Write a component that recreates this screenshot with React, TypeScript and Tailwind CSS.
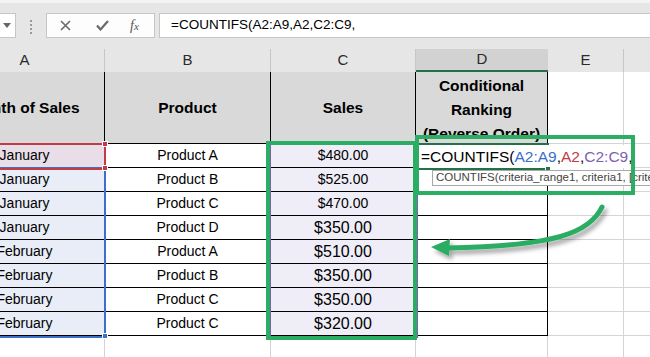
import React from "react";

const GREEN = "#2bad63";

const rows: [string, string, string, boolean][] = [
  ["January", "Product A", "$480.00", false],
  ["January", "Product B", "$525.00", false],
  ["January", "Product C", "$470.00", false],
  ["January", "Product D", "$350.00", true],
  ["February", "Product A", "$510.00", true],
  ["February", "Product B", "$350.00", true],
  ["February", "Product C", "$350.00", true],
  ["February", "Product C", "$320.00", true],
];

const FormulaBar = () => (
  <div className="h-[49px] bg-[#e6e6e6] border-t-[3px] border-[#f3f3f3] flex items-start pt-[10px]">
    <div className="w-[16px] h-[25px] bg-white border border-l-0 border-[#c6c6c6] flex items-center pl-[3px]">
      <svg width="8" height="5" viewBox="0 0 8 5">
        <path d="M0 0 L8 0 L4 5 Z" fill="#666" />
      </svg>
    </div>
    <div className="ml-[14px] mt-[7px] flex flex-col gap-[2px]">
      <span className="w-[2px] h-[2px] bg-[#9a9a9a]" />
      <span className="w-[2px] h-[2px] bg-[#9a9a9a]" />
      <span className="w-[2px] h-[2px] bg-[#9a9a9a]" />
      <span className="w-[2px] h-[2px] bg-[#9a9a9a]" />
    </div>
    <div className="ml-[14px] w-[109px] h-[25px] bg-[#fdfdfd] border border-[#c6c6c6] flex items-center">
      <svg className="ml-[13px]" width="11" height="11" viewBox="0 0 11 11">
        <path d="M1 1 L10 10 M10 1 L1 10" stroke="#6a6a6a" strokeWidth="1.6" />
      </svg>
      <svg className="ml-[25px]" width="13" height="11" viewBox="0 0 13 11">
        <path d="M1 5.5 L4.5 9.5 L12 1" stroke="#6a6a6a" strokeWidth="2.2" fill="none" />
      </svg>
      <span className="ml-[21px] font-['Liberation_Serif',serif] italic text-[14px] text-[#555] leading-none">
        f<span className="text-[11px]">x</span>
      </span>
    </div>
    <div className="ml-[4px] flex-1 h-[25px] bg-white border border-r-0 border-[#c6c6c6] flex items-center pl-[11px] text-[13.5px] text-black">
      =COUNTIFS(A2:A9,A2,C2:C9,
    </div>
  </div>
);

const ColumnHeaders = () => (
  <div className="ml-[-55px] flex h-[23px] bg-[#e6e6e6] text-[15px] text-[#2a2a2a]">
    <div className="w-[160px] shrink-0 border-r border-[#c6c6c6] flex items-center justify-center">A</div>
    <div className="w-[166px] shrink-0 border-r border-[#c6c6c6] flex items-center justify-center">B</div>
    <div className="w-[145px] shrink-0 border-r border-[#c6c6c6] flex items-center justify-center">C</div>
    <div className="w-[132px] shrink-0 bg-[#d2d2d2] border-b-2 border-[#217346] flex items-center justify-center">D</div>
    <div className="w-[76px] shrink-0 border-r border-[#c6c6c6] flex items-center justify-center">E</div>
    <div className="flex-1" />
  </div>
);

const Grid = () => (
  <div className="ml-[-55px] flex flex-col text-black">
    <div className="flex h-[72px] font-bold text-[15.5px] leading-[24px] text-center">
      <div className="w-[160px] shrink-0 bg-[#d9d9d9] border-r border-b border-black flex items-center justify-center">
        Month of Sales
      </div>
      <div className="w-[166px] shrink-0 bg-[#d9d9d9] border-r border-b border-black flex items-center justify-center">
        Product
      </div>
      <div className="w-[145px] shrink-0 bg-[#d9d9d9] border-r border-b border-black flex items-center justify-center">
        Sales
      </div>
      <div className="w-[132px] shrink-0 bg-[#d9d9d9] border-r border-b border-black flex flex-col items-center pt-[2px] overflow-hidden whitespace-nowrap">
        <span>Conditional</span>
        <span>Ranking</span>
        <span>(Reverse Order)</span>
      </div>
      <div className="w-[76px] shrink-0 border-r border-b border-[#d4d4d4]" />
      <div className="flex-1 border-b border-[#d4d4d4]" />
    </div>
    {rows.map(([month, product, sales, big], i) => (
      <div key={i} className="flex h-[24px] text-[14px]">
        <div
          className={`w-[160px] shrink-0 border-r border-b border-black flex items-center justify-center ${
            i === 0 ? "bg-[#e9dde8]" : "bg-[#e8edf7]"
          }`}
        >
          {month}
        </div>
        <div className="w-[166px] shrink-0 border-r border-b border-black flex items-center justify-center">
          {product}
        </div>
        <div
          className={`w-[145px] shrink-0 bg-[#efedf7] border-r border-b border-black flex items-center justify-center ${
            big ? "text-[16px]" : "text-[14px]"
          }`}
        >
          {sales}
        </div>
        <div className="w-[132px] shrink-0 border-r border-b border-black" />
        <div className="w-[76px] shrink-0 border-r border-b border-[#d4d4d4]" />
        <div className="flex-1 border-b border-[#d4d4d4]" />
      </div>
    ))}
    <div className="flex h-[24px]">
      <div className="w-[160px] shrink-0 border-r border-b border-[#d4d4d4]" />
      <div className="w-[166px] shrink-0 border-r border-b border-[#d4d4d4]" />
      <div className="w-[145px] shrink-0 border-r border-b border-[#d4d4d4]" />
      <div className="w-[132px] shrink-0 border-r border-b border-[#d4d4d4]" />
      <div className="w-[76px] shrink-0 border-r border-b border-[#d4d4d4]" />
      <div className="flex-1 border-b border-[#d4d4d4]" />
    </div>
  </div>
);

const Overlays = () => (
  <>
    {/* A2:A9 blue range */}
    <div className="absolute left-[-4px] top-[167px] w-[110px] h-[171px] border-2 border-[#3a70c8]" />
    <div className="absolute left-[102px] top-[333px] w-[6px] h-[6px] bg-[#3a70c8] border border-white" />
    {/* A2 red range */}
    <div className="absolute left-[-4px] top-[143px] w-[110px] h-[27px] border-2 border-[#c43b48]" />
    <div className="absolute left-[102px] top-[141px] w-[6px] h-[6px] bg-[#c43b48] border border-white" />
    <div className="absolute left-[102px] top-[165px] w-[6px] h-[6px] bg-[#c43b48] border border-white" />
    {/* C2:C9 purple range */}
    <div className="absolute left-[269px] top-[143px] w-[149px] h-[195px] border-2 border-[#7e5fb4]" />
    {/* green box around sales */}
    <div
      className="absolute left-[266px] top-[141px] w-[151px] h-[199px] border-4"
      style={{ borderColor: GREEN }}
    />
    {/* editing cell D2 */}
    <div className="absolute left-[417px] top-[143px] w-[132px] h-[27px] border-2 border-[#217346]" />
    <div className="absolute left-[419px] top-[145px] w-[214px] h-[23px] bg-white flex items-center pl-[2px] text-[15.5px] text-black whitespace-nowrap">
      =COUNTIFS(<span className="text-[#3a70c8]">A2:A9</span>,<span className="text-[#c43b48]">A2</span>,
      <span className="text-[#7e5fb4]">C2:C9</span>,<span className="ml-[1px] w-px h-[17px] bg-black" />
    </div>
    <div className="absolute left-[545px] top-[166px] w-[6px] h-[6px] bg-[#217346] border border-white" />
    {/* tooltip */}
    <div className="absolute left-[432px] top-[170px] w-[240px] h-[16px] bg-white border border-[#a8a8a8] flex items-center pl-[3px] text-[11.5px] text-[#444] whitespace-nowrap">
      COUNTIFS(criteria_range1, criteria1, [criteria_range2, criteria2], ...)
    </div>
    {/* green box around formula */}
    <div
      className="absolute left-[415px] top-[135px] w-[220px] h-[60px] border-4"
      style={{ borderColor: GREEN }}
    />
    {/* arrow */}
    <svg className="absolute left-0 top-0" width="650" height="357" viewBox="0 0 650 357">
      <defs>
        <filter id="sh" x="-20%" y="-50%" width="140%" height="200%">
          <feDropShadow dx="3" dy="4" stdDeviation="2" floodColor="#000" floodOpacity="0.35" />
        </filter>
      </defs>
      <g filter="url(#sh)">
        <path
          d="M602 207 C590 232 558 246 447 248"
          stroke={GREEN}
          strokeWidth="5"
          strokeLinecap="round"
          fill="none"
        />
        <path d="M431 247 L450 239 L449 256 Z" fill={GREEN} />
      </g>
    </svg>
  </>
);

export default function App() {
  return (
    <div className="relative w-[650px] h-[357px] overflow-hidden bg-white font-['Liberation_Sans',Arial,sans-serif]">
      <FormulaBar />
      <ColumnHeaders />
      <Grid />
      <Overlays />
    </div>
  );
}
